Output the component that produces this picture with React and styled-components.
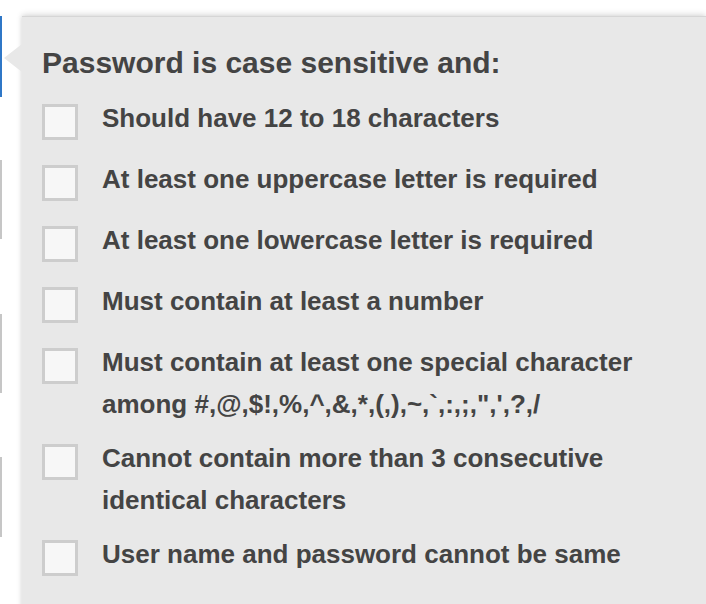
import React from "react";
import styled, { createGlobalStyle } from "styled-components";

const GlobalStyle = createGlobalStyle`
  html, body {
    margin: 0;
    padding: 0;
    background: #ffffff;
    overflow: hidden;
  }
  body {
    font-family: "Liberation Sans", Arial, Helvetica, sans-serif;
  }
`;

const Page = styled.div`
  position: relative;
  width: 706px;
  height: 604px;
  overflow: hidden;
`;

// form fields sitting behind the popover; only their right edges show
const FieldColumn = styled.div`
  display: flex;
  flex-direction: column;
  padding-top: 16px;
`;

const FieldEdge = styled.div`
  width: 2px;
  height: ${props => props.h}px;
  margin-bottom: ${props => props.gap}px;
  background: ${props => (props.active ? "#2f77c7" : "#c6c6c6")};
`;

const Popover = styled.section`
  position: absolute;
  left: 22px;
  top: 16px;
  right: 0;
  bottom: -20px;
  box-sizing: border-box;
  padding: 28px 40px 0 20px;
  background: #e8e8e8;
  border-top: 1px solid #d6d6d6;
  box-shadow: 0 -2px 6px rgba(0, 0, 0, 0.12), -1px 0 4px rgba(0, 0, 0, 0.06);
  color: #444444;

  &::before {
    content: "";
    position: absolute;
    left: -18px;
    top: 27px;
    border-style: solid;
    border-width: 14.5px 18px 14.5px 0;
    border-color: transparent #e8e8e8 transparent transparent;
  }
`;

const Title = styled.h3`
  margin: 0 0 16px;
  font-size: 30px;
  line-height: 36px;
  font-weight: bold;
`;

const RuleList = styled.ul`
  list-style: none;
  margin: 0;
  padding: 0;
  display: flex;
  flex-direction: column;
  gap: 12px;
`;

const Rule = styled.li`
  display: flex;
  align-items: flex-start;
  gap: 24px;
  min-height: 49px;
`;

const Box = styled.span`
  flex: none;
  box-sizing: border-box;
  width: 36px;
  height: 36px;
  margin-top: 7px;
  border: 3px solid #cdcdcd;
  background: #f7f7f7;
`;

const RuleText = styled.span`
  font-size: 26px;
  line-height: 42px;
  font-weight: bold;
`;

const rules = [
  "Should have 12 to 18 characters",
  "At least one uppercase letter is required",
  "At least one lowercase letter is required",
  "Must contain at least a number",
  "Must contain at least one special character among #,@,$!,%,^,&,*,(,),~,`,:,;,\",',?,/",
  "Cannot contain more than 3 consecutive identical characters",
  "User name and password cannot be same"
];

const fields = [
  { h: 81, gap: 63, active: true },
  { h: 79, gap: 75 },
  { h: 79, gap: 64 },
  { h: 80, gap: 0 }
];

export default function App() {
  return (
    <Page>
      <GlobalStyle />
      <FieldColumn>
        {fields.map((f, i) => (
          <FieldEdge key={i} h={f.h} gap={f.gap} active={f.active} />
        ))}
      </FieldColumn>
      <Popover>
        <Title>Password is case sensitive and:</Title>
        <RuleList>
          {rules.map(rule => (
            <Rule key={rule}>
              <Box />
              <RuleText>{rule}</RuleText>
            </Rule>
          ))}
        </RuleList>
      </Popover>
    </Page>
  );
}
